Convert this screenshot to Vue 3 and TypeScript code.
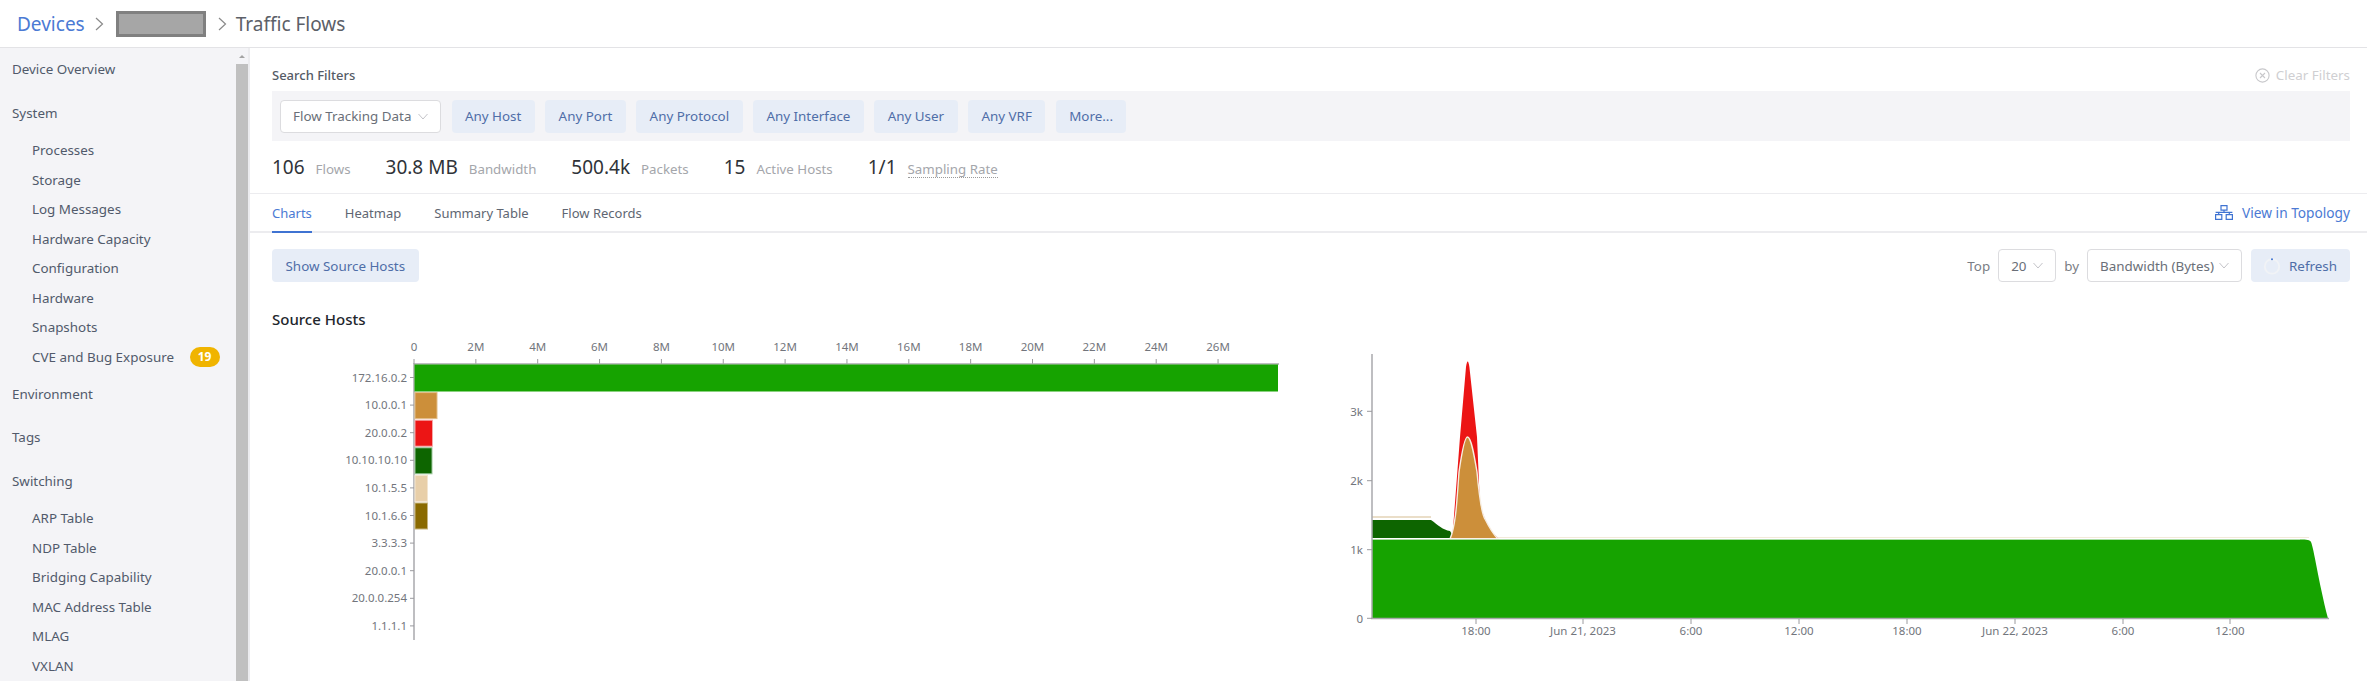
<script setup lang="ts">
interface NavSection { title: string; items: { label: string; badge?: string }[] }
const nav: NavSection[] = [
  { title: 'Device Overview', items: [] },
  { title: 'System', items: [
    { label: 'Processes' }, { label: 'Storage' }, { label: 'Log Messages' }, { label: 'Hardware Capacity' },
    { label: 'Configuration' }, { label: 'Hardware' }, { label: 'Snapshots' }, { label: 'CVE and Bug Exposure', badge: '19' },
  ] },
  { title: 'Environment', items: [] },
  { title: 'Tags', items: [] },
  { title: 'Switching', items: [
    { label: 'ARP Table' }, { label: 'NDP Table' }, { label: 'Bridging Capability' },
    { label: 'MAC Address Table' }, { label: 'MLAG' }, { label: 'VXLAN' },
  ] },
]
const filters = ['Any Host', 'Any Port', 'Any Protocol', 'Any Interface', 'Any User', 'Any VRF', 'More...']
const stats = [
  { value: '106', label: 'Flows' },
  { value: '30.8 MB', label: 'Bandwidth' },
  { value: '500.4k', label: 'Packets' },
  { value: '15', label: 'Active Hosts' },
  { value: '1/1', label: 'Sampling Rate', dotted: true },
]
const tabs = ['Charts', 'Heatmap', 'Summary Table', 'Flow Records']

// Bar chart geometry (svg origin = 272, 330 on the page)
const barX = 142
const barTop = 35
const rowH = 27.6
const hosts = [
  { name: '172.16.0.2', end: 863.5, color: '#16a300', edge: '#16a300' },
  { name: '10.0.0.1', end: 23, color: '#cc8f3a', edge: '#e2bd88' },
  { name: '20.0.0.2', end: 18.5, color: '#ec1515', edge: '#f6a8a8' },
  { name: '10.10.10.10', end: 18, color: '#0d6500', edge: '#9cc79c' },
  { name: '10.1.5.5', end: 13.5, color: '#e8cfa9', edge: '#f3e5d0' },
  { name: '10.1.6.6', end: 13.5, color: '#8a6a00', edge: '#c7b57f' },
  { name: '3.3.3.3', end: 0, color: '', edge: '' },
  { name: '20.0.0.1', end: 0, color: '', edge: '' },
  { name: '20.0.0.254', end: 0, color: '', edge: '' },
  { name: '1.1.1.1', end: 0, color: '', edge: '' },
]
const xTicks = Array.from({ length: 14 }, (_, i) => ({
  x: barX + i * 61.85,
  label: i === 0 ? '0' : `${i * 2}M`,
}))

// Area chart geometry (svg origin = 1330, 330 on the page)
const yTicks = [
  { y: 289.3, label: '0' },
  { y: 220.7, label: '1k' },
  { y: 151.7, label: '2k' },
  { y: 82.3, label: '3k' },
]
const timeTicks = [
  { x: 146, label: '18:00' }, { x: 253, label: 'Jun 21, 2023' }, { x: 361, label: '6:00' },
  { x: 469, label: '12:00' }, { x: 577, label: '18:00' }, { x: 685, label: 'Jun 22, 2023' },
  { x: 793, label: '6:00' }, { x: 900, label: '12:00' },
]
</script>

<template>
  <div class="app">
    <header class="crumbs">
      <a class="crumb-link">Devices</a>
      <svg class="chev" width="9" height="14" viewBox="0 0 9 14"><path d="M1 1l6.5 6L1 13" /></svg>
      <span class="redacted"></span>
      <svg class="chev" width="9" height="14" viewBox="0 0 9 14"><path d="M1 1l6.5 6L1 13" /></svg>
      <span class="crumb-current">Traffic Flows</span>
    </header>

    <div class="body">
      <nav class="sidebar">
        <section v-for="s in nav" :key="s.title" class="nav-section">
          <div class="nav-title">{{ s.title }}</div>
          <ul v-if="s.items.length" class="nav-list">
            <li v-for="i in s.items" :key="i.label" class="nav-item">
              <span>{{ i.label }}</span>
              <span v-if="i.badge" class="badge">{{ i.badge }}</span>
            </li>
          </ul>
        </section>
      </nav>
      <div class="scrollbar">
        <div class="scroll-arrow"></div>
        <div class="scroll-thumb"></div>
      </div>

      <main class="main">
        <div class="filters-head">
          <span class="filters-title">Search Filters</span>
          <span class="clear">
            <svg width="15" height="15" viewBox="0 0 15 15"><circle cx="7.5" cy="7.5" r="6.6" /><path d="M5 5l5 5M10 5l-5 5" /></svg>
            Clear Filters
          </span>
        </div>
        <div class="filter-bar">
          <div class="select select-flow">Flow Tracking Data
            <svg class="caret" width="10" height="7" viewBox="0 0 10 7"><path d="M.5 1L5 6l4.5-5" /></svg>
          </div>
          <button v-for="f in filters" :key="f" class="btn filter-btn">{{ f }}</button>
        </div>

        <div class="stats">
          <div v-for="s in stats" :key="s.label" class="stat">
            <span class="stat-value">{{ s.value }}</span>
            <span class="stat-label" :class="{ dotted: s.dotted }">{{ s.label }}</span>
          </div>
        </div>

        <div class="tabs">
          <a v-for="(t, i) in tabs" :key="t" class="tab" :class="{ active: i === 0 }">{{ t }}</a>
          <a class="topology">
            <svg width="18" height="15" viewBox="0 0 18 15"><path d="M6 .6h6v4.6H6zM.6 9.6h6.2v4.8H.6zM11.2 9.6h6.2v4.8h-6.2zM.6 7.3h16.8M3.7 7.3v2.3M14.3 7.3v2.3M9 5.2v2.1" /></svg>
            View in Topology
          </a>
        </div>

        <div class="toolbar">
          <button class="btn">Show Source Hosts</button>
          <div class="controls">
            <span>Top</span>
            <div class="select select-top">20
              <svg class="caret" width="10" height="7" viewBox="0 0 10 7"><path d="M.5 1L5 6l4.5-5" /></svg>
            </div>
            <span>by</span>
            <div class="select select-by">Bandwidth (Bytes)
              <svg class="caret" width="10" height="7" viewBox="0 0 10 7"><path d="M.5 1L5 6l4.5-5" /></svg>
            </div>
            <button class="btn refresh">
              <svg width="20" height="20" viewBox="0 0 20 20"><circle cx="10" cy="10.5" r="8" class="spin-ring" /><circle cx="10" cy="2.5" r="1.1" class="spin-dot" /></svg>
              Refresh
            </button>
          </div>
        </div>

        <h2 class="chart-title">Source Hosts</h2>

        <div class="charts">
          <svg class="bar-chart" width="1058" height="321" viewBox="0 0 1058 321">
            <g v-for="t in xTicks" :key="t.label">
              <line :x1="t.x" :x2="t.x" y1="30" y2="35" class="tick" />
              <text :x="t.x" y="22" text-anchor="middle" class="axis-text">{{ t.label }}</text>
            </g>
            <line :x1="barX" x2="1007" y1="35" y2="35" class="axis" />
            <line :x1="barX" :x2="barX" y1="34" y2="311" class="axis" />
            <g v-for="(h, i) in hosts" :key="h.name">
              <line :x1="barX - 4" :x2="barX" :y1="barTop + rowH * i + 13.5" :y2="barTop + rowH * i + 13.5" class="tick" />
              <text :x="barX - 7" :y="barTop + rowH * i + 17.5" text-anchor="end" class="axis-text">{{ h.name }}</text>
              <rect v-if="h.end" :x="barX + 1" :y="barTop + rowH * i + 1" :width="h.end - 1" height="26" :fill="h.color" :stroke="h.edge" stroke-width="1" />
            </g>
          </svg>

          <svg class="area-chart" width="1037" height="321" viewBox="0 0 1037 321">
            <path d="M42 290V191H101C108 196 113 201 120 202Q122 205 124 209H42Z" fill="#0d6500" />
            <path d="M42 188H101" fill="none" stroke="#d6bd92" stroke-width="1.2" />
            <path d="M123 200L130 108L136 38Q137.7 27 139.4 38L147 108L150 177L157 195Q161 203 168 209H123Z" fill="#ec1515" />
            <path d="M120 210C126 196 127 170 129 143C132 122 135 108 137.5 108C141 108 144 125 147 143C149 165 151 184 155 190C159 198 164 206 168 210Z" fill="#cc8f3a" stroke="#f7eee2" stroke-width="1.4" />
            <path d="M168 208.5H979" fill="none" stroke="#f3e9da" stroke-width="1.2" />
            <path d="M42 210.5H970C977 210.5 980 211 981 213C984 220 988 250 998 289.5H42Z" fill="#16a300" />
            <path d="M42 209.8H970" fill="none" stroke="#ffffff" stroke-width="1" />
            <line x1="42" x2="42" y1="25" y2="290" class="axis" />
            <line x1="41" x2="999" y1="289.5" y2="289.5" class="axis" />
            <g v-for="t in yTicks" :key="t.label">
              <line x1="37" x2="42" :y1="t.y" :y2="t.y" class="tick" />
              <text x="33" :y="t.y + 4.5" text-anchor="end" class="axis-text">{{ t.label }}</text>
            </g>
            <g v-for="t in timeTicks" :key="t.x">
              <line :x1="t.x" :x2="t.x" y1="290" y2="295" class="tick" />
              <text :x="t.x" y="306" text-anchor="middle" class="axis-text">{{ t.label }}</text>
            </g>
          </svg>
        </div>
      </main>
    </div>
  </div>
</template>

<style>
html, body { margin: 0; background: #fff; overflow: hidden; }
</style>

<style scoped>
.app {
  width: 2367px;
  height: 681px;
  overflow: hidden;
  display: flex;
  flex-direction: column;
  font-family: "Noto Sans", "Open Sans", sans-serif;
  font-size: 13.4px;
  color: #5b6270;
  background: #fff;
}
.crumbs {
  height: 47px;
  flex: none;
  display: flex;
  align-items: center;
  padding-left: 17px;
  border-bottom: 1px solid #e3e3e6;
  font-size: 19px;
}
.crumb-link { color: #4b7ad4; }
.chev { margin-left: 10px; }
.chev path { fill: none; stroke: #8a8a8a; stroke-width: 1.2; }
.redacted {
  width: 90px;
  height: 26px;
  margin-left: 12px;
  box-sizing: border-box;
  background: #a6a6a6;
  border: 3px solid #808080;
}
.redacted + .chev { margin-left: 12px; }
.crumb-current { margin-left: 9px; color: #5c6068; }

.body { flex: 1; display: flex; min-height: 0; }

.sidebar {
  width: 236px;
  flex: none;
  padding-top: 7px;
  box-sizing: border-box;
  background: #f4f4f7;
  color: #515a6b;
}
.nav-section + .nav-section { margin-top: 14px; }
.nav-title {
  height: 29.5px;
  line-height: 29.5px;
  padding-left: 12px;
}
.nav-list { list-style: none; margin: 8px 0 -6.5px; padding: 0 0 0 32px; }
.nav-item {
  height: 29.5px;
  line-height: 29.5px;
  display: flex;
  align-items: center;
  justify-content: space-between;
  padding-right: 16.5px;
}
.badge {
  width: 30px;
  height: 20px;
  border-radius: 10px;
  background: #f0b400;
  color: #fff;
  font-size: 12px;
  font-weight: 700;
  line-height: 20px;
  text-align: center;
}

.scrollbar {
  width: 12px;
  flex: none;
  background: #f4f4f7;
  display: flex;
  flex-direction: column;
  align-items: center;
  border-right: 2px solid #ececef;
}
.scroll-arrow {
  margin-top: 7px;
  width: 0;
  height: 0;
  border-left: 3px solid transparent;
  border-right: 3px solid transparent;
  border-bottom: 3px solid #a3a3a3;
}
.scroll-thumb { width: 12px; flex: 1; margin-top: 6px; background: #c0c0c0; }

.main {
  flex: 1;
  min-width: 0;
  padding: 0 17px 0 22px;
}
.filters-head {
  height: 43px;
  display: flex;
  align-items: flex-end;
  justify-content: space-between;
  padding-bottom: 7px;
  box-sizing: border-box;
  line-height: 18px;
}
.filters-title { font-weight: 500; color: #555b66; font-size: 13px; }
.clear { display: flex; align-items: center; gap: 6px; color: #cfcfd2; }
.clear svg { fill: none; stroke: #c8c8cb; stroke-width: 1.1; }

.filter-bar {
  height: 50px;
  background: #f4f4f7;
  display: flex;
  align-items: center;
  padding-left: 8px;
  gap: 10.5px;
  box-sizing: border-box;
}
.select {
  height: 33px;
  box-sizing: border-box;
  background: #fff;
  border: 1px solid #dcdcdf;
  border-radius: 4px;
  display: flex;
  align-items: center;
  justify-content: space-between;
  color: #6a6f78;
}
.select-flow { width: 161px; padding: 0 12px; }
.select-top { width: 58px; padding: 0 12px; }
.select-by { width: 155px; padding: 0 12px; }
.caret path { fill: none; stroke: #c4c4c8; stroke-width: 1; }

.btn {
  height: 33px;
  padding: 0 13.5px;
  border: 0;
  border-radius: 4px;
  background: #e7edf7;
  color: #4f6ea8;
  font: inherit;
  white-space: nowrap;
}
.filter-btn { padding: 0 13.4px; }

.stats {
  height: 52px;
  display: flex;
  align-items: center;
  gap: 35px;
}
.stat { display: flex; align-items: baseline; gap: 11px; }
.stat-value { font-size: 19px; color: #2f3338; }
.stat-label { font-size: 13.3px; color: #a4a6ab; }
.dotted { border-bottom: 1px dotted #9a9a9a; line-height: 15px; }

.tabs {
  margin-left: -22px;
  margin-right: -17px;
  padding: 0 17px 0 22px;
  height: 37px;
  display: flex;
  align-items: stretch;
  gap: 33px;
  border-top: 1px solid #ececef;
  border-bottom: 2px solid #ececef;
}
.tab {
  display: flex;
  align-items: center;
  color: #606672;
  font-size: 13px;
  margin-bottom: -2px;
  border-bottom: 2px solid transparent;
}
.tab.active { color: #4b7ad4; border-bottom-color: #3f73d2; }
.topology {
  margin-left: auto;
  display: flex;
  align-items: center;
  gap: 9px;
  color: #4b7ad4;
  font-size: 13.7px;
}
.topology svg { fill: none; stroke: #3f73d2; stroke-width: 1.2; }

.toolbar {
  margin-top: 16px;
  display: flex;
  justify-content: space-between;
  align-items: center;
}
.controls { display: flex; align-items: center; gap: 8px; color: #7a7d84; }
.refresh { display: flex; align-items: center; gap: 8px; padding: 0 13px 0 12px; width: 99px; margin-left: 1px; box-sizing: border-box; }
.spin-ring { fill: none; stroke: #f1f3f6; stroke-width: 2; }
.spin-dot { fill: #3f73d2; }

.chart-title {
  margin: 27px 0 0;
  font-size: 15px;
  line-height: 21px;
  font-weight: 500;
  color: #22262c;
  height: 21px;
}

.charts { display: flex; align-items: flex-start; margin-top: -1px; }
.bar-chart, .area-chart { flex: none; display: block; }
.axis { stroke: #a8a8ac; stroke-width: 1.5; }
.tick { stroke: #9a9a9e; stroke-width: 1; }
.axis-text { font-size: 11.5px; fill: #72757c; font-family: "Noto Sans", sans-serif; }
</style>
